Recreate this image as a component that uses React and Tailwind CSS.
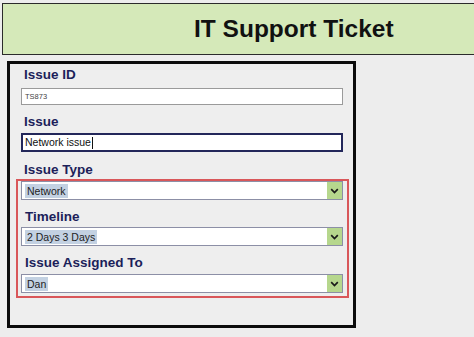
import React from "react";

function Chevron() {
  return (
    <svg width="9" height="6" viewBox="0 0 9 6">
      <path d="M1.2 1.2 L4.5 4.5 L7.8 1.2" fill="none" stroke="#1a1a1a" strokeWidth="1.7" />
    </svg>
  );
}

function Select({ value }) {
  return (
    <div className="flex h-[19px] w-[322px] border border-[#8c8fa6] bg-white">
      <div className="flex flex-1 items-center pl-[3px]">
        <span className="bg-[#c3d1e2] px-[2px] text-[10.5px] leading-[14px] text-[#222]">{value}</span>
      </div>
      <div className="flex w-[15px] items-center justify-center bg-[#b6d78d]">
        <Chevron />
      </div>
    </div>
  );
}

function Label({ children, className = "" }) {
  return (
    <div className={"text-[13.5px] font-bold leading-[16px] text-[#1c1f5a] " + className}>{children}</div>
  );
}

export default function App() {
  return (
    <div
      className="h-[337px] w-[474px] overflow-hidden bg-[#ededed]"
      style={{ fontFamily: '"Liberation Sans", Arial, sans-serif' }}
    >
      <div className="ml-[2px] mt-[3px] flex h-[52px] items-center border-[1.5px] border-r-0 border-[#2b2b2b] bg-[#d5e9b9] pl-[191px]">
        <span className="text-[24.5px] font-bold text-[#111]">IT Support Ticket</span>
      </div>
      <div className="ml-[7px] mt-[6px] h-[267px] w-[349px] border-[3px] border-[#0c0c0c] bg-[#eeeeee] pt-[3px]">
        <Label className="pl-[14px]">Issue ID</Label>
        <div className="ml-[11px] mt-[5px] flex h-[17px] w-[322px] items-center border border-[#9a9a9a] bg-white pl-[3px] text-[7.5px] text-[#444]">
          TS873
        </div>
        <Label className="mt-[9px] pl-[14px]">Issue</Label>
        <div className="ml-[11px] mt-[3px] flex h-[19px] w-[322px] items-center border-2 border-[#23275a] bg-white pl-[2px] text-[10.5px] text-[#111]">
          Network issue<span className="ml-[1px] inline-block h-[12px] w-px bg-[#111]" />
        </div>
        <Label className="mt-[10px] pl-[14px]">Issue Type</Label>
        <div className="ml-[6px] mt-[1px] w-[333px] border-2 border-[#d9575a] px-[3px] pb-[3px]">
          <Select value="Network" />
          <Label className="mt-[9px] pl-[4px]">Timeline</Label>
          <div className="mt-[2px]">
            <Select value="2 Days 3 Days" />
          </div>
          <Label className="mt-[9px] pl-[4px]">Issue Assigned To</Label>
          <div className="mt-[3px]">
            <Select value="Dan" />
          </div>
        </div>
      </div>
    </div>
  );
}
